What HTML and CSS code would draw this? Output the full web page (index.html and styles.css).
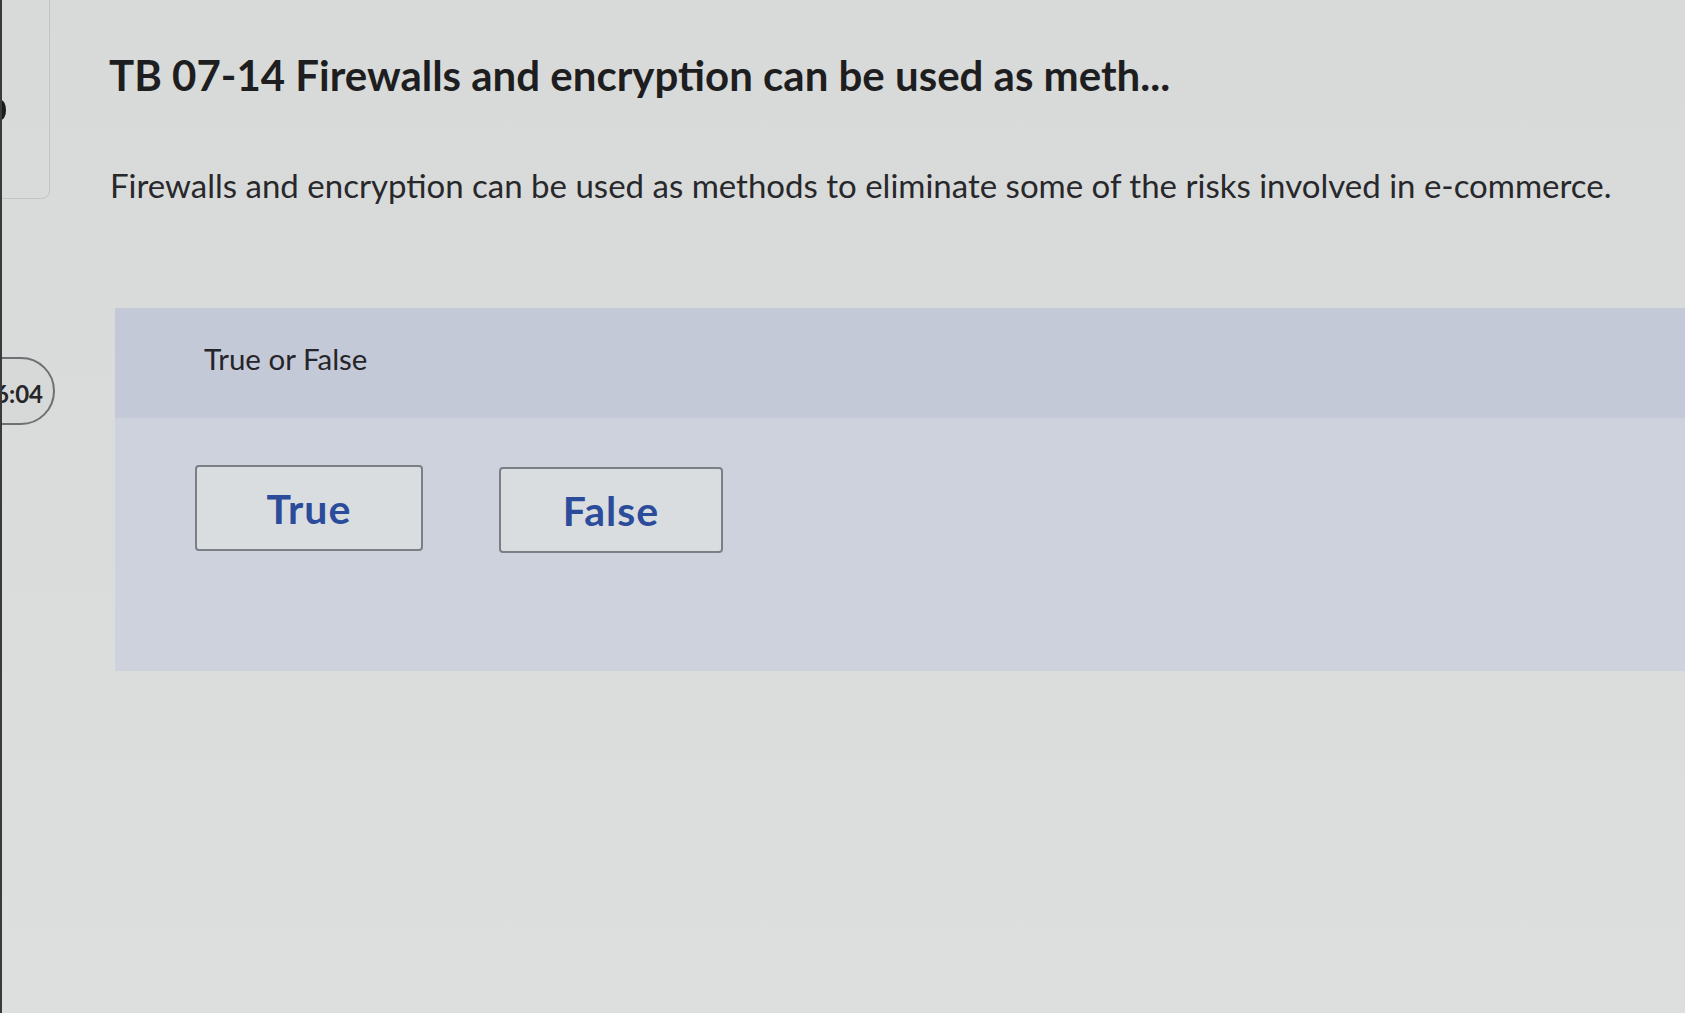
FILE: index.html
```
<!DOCTYPE html>
<html lang="en">
<head>
<meta charset="utf-8">
<title>TB 07-14</title>
<link rel="stylesheet" href="styles.css">
</head>
<body>
<div class="side-card"></div>
<div class="side-dot"></div>
<div class="timer"><span class="timer-text">6:04</span></div>
<main class="page">
  <h1 class="title">TB 07-14 Firewalls and encryption can be used as meth...</h1>
  <p class="prompt">Firewalls and encryption can be used as methods to eliminate some of the risks involved in e-commerce.</p>
  <section class="question">
    <div class="question-head">True or False</div>
    <div class="answers">
      <button class="answer answer-true">True</button>
      <button class="answer answer-false">False</button>
    </div>
  </section>
</main>
</body>
</html>
```
FILE: styles.css
```
html, body {
  margin: 0;
  padding: 0;
}
body {
  width: 1685px;
  height: 1013px;
  overflow: hidden;
  position: relative;
  background: linear-gradient(180deg, #d7dad8 0%, #d9dcda 50%, #dcdfdd 100%);
  font-family: Lato, "Open Sans", sans-serif;
  color: #232327;
  border-left: 2px solid #3a3a3c;
  box-sizing: border-box;
}
.side-card {
  position: absolute;
  left: -10px;
  top: -10px;
  width: 56px;
  height: 207px;
  border: 1px solid #c2c5c3;
  border-radius: 8px;
}
.side-dot {
  position: absolute;
  left: -6px;
  top: 100px;
  width: 10px;
  height: 20px;
  border-radius: 50%;
  background: #1b1b1d;
}
.timer {
  position: absolute;
  left: -40px;
  top: 357px;
  width: 93px;
  height: 68px;
  border: 2px solid #6e7174;
  border-radius: 34px;
  box-sizing: border-box;
  display: flex;
  align-items: center;
  justify-content: flex-end;
  padding: 4px 10px 0 0;
  background: #d6d9d8;
}
.timer-text {
  font-weight: 700;
  font-size: 24px;
  color: #262629;
}
.page {
  padding: 49px 0 0 107px;
}
.title {
  margin: 0;
  font-size: 42px;
  font-weight: 700;
  line-height: 52px;
  color: #1e1e21;
  letter-spacing: 0;
}
.prompt {
  margin: 62px 0 0 1px;
  font-size: 33px;
  line-height: 44px;
  color: #28282c;
}
.question {
  margin: 101px 0 0 6px;
  background: #cdd2dc;
  height: 363px;
}
.question-head {
  height: 110px;
  background: #c4c9d7;
  box-sizing: border-box;
  padding: 33px 0 0 89px;
  font-size: 29.5px;
  line-height: 36px;
  color: #252529;
}
.answers {
  display: flex;
  gap: 76px;
  padding: 47px 0 0 80px;
}
.answer {
  height: 86px;
  background: #dadddf;
  border: 2px solid #7b7f86;
  border-radius: 4px;
  font-family: Lato, "Open Sans", sans-serif;
  font-weight: 700;
  font-size: 41px;
  letter-spacing: 1px;
  color: #2b4c9a;
  padding: 0;
}
.answer-true {
  width: 228px;
}
.answer-false {
  width: 224px;
  margin-top: 2px;
}
```
